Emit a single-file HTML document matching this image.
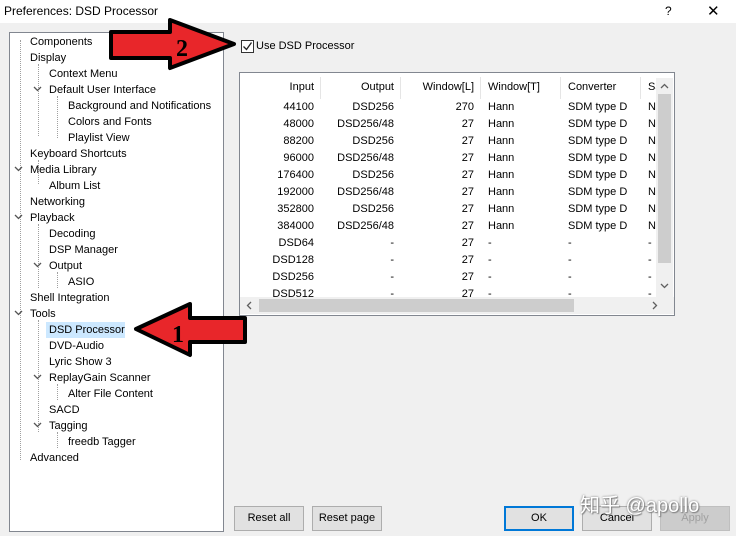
<!DOCTYPE html>
<html><head><meta charset="utf-8"><style>
*{margin:0;padding:0;box-sizing:border-box}
body{width:736px;height:536px;background:#f0f0f0;font-family:"Liberation Sans","Noto Sans CJK SC",sans-serif;font-size:11px;color:#000;position:relative;overflow:hidden}
.abs{position:absolute;white-space:nowrap}
#title{left:0;top:0;width:736px;height:23px;background:#fff}
#tree{left:9px;top:32px;width:215px;height:500px;background:#fff;border:1px solid #828790}
.t{position:absolute;line-height:14px;white-space:nowrap}
#lv{left:239px;top:72px;width:436px;height:244px;background:#fff;border:1px solid #828790;overflow:hidden}
.c{position:absolute;white-space:nowrap;line-height:14px}
.btn{position:absolute;top:506px;width:70px;height:25px;background:#e1e1e1;border:1px solid #adadad;text-align:center;line-height:23px;font-size:11px}
.dot{position:absolute;border-left:1px dotted #a0a0a0}
.ex{position:absolute;width:9px;height:6px}
</style></head><body>
<div id="title" class="abs"></div>
<div class="abs" style="left:4px;top:4px;font-size:12px">Preferences: DSD Processor</div>
<div class="abs" style="left:665px;top:4px;font-size:12px">?</div>
<div class="abs" style="left:707px;top:2px;font-size:15px">✕</div>

<div id="tree" class="abs">
<div class="dot" style="left:10px;top:7px;height:420px"></div>
<div class="dot" style="left:28px;top:31px;height:72px"></div>
<div class="dot" style="left:28px;top:127px;height:24px"></div>
<div class="dot" style="left:28px;top:191px;height:64px"></div>
<div class="dot" style="left:47px;top:63px;height:42px"></div>
<div class="dot" style="left:47px;top:239px;height:16px"></div>
<div class="dot" style="left:28px;top:287px;height:112px"></div>
<div class="dot" style="left:47px;top:351px;height:16px"></div>
<div class="dot" style="left:47px;top:399px;height:16px"></div>
</div>
<div class="abs" style="left:9px;top:33px;width:215px;height:500px">
<svg class="ex" style="left:24px;top:53px" viewBox="0 0 9 6"><polyline points="1,1 4.5,4.5 8,1" fill="none" stroke="#555" stroke-width="1.3"/></svg>
<svg class="ex" style="left:5px;top:133px" viewBox="0 0 9 6"><polyline points="1,1 4.5,4.5 8,1" fill="none" stroke="#555" stroke-width="1.3"/></svg>
<svg class="ex" style="left:5px;top:181px" viewBox="0 0 9 6"><polyline points="1,1 4.5,4.5 8,1" fill="none" stroke="#555" stroke-width="1.3"/></svg>
<svg class="ex" style="left:24px;top:229px" viewBox="0 0 9 6"><polyline points="1,1 4.5,4.5 8,1" fill="none" stroke="#555" stroke-width="1.3"/></svg>
<svg class="ex" style="left:5px;top:277px" viewBox="0 0 9 6"><polyline points="1,1 4.5,4.5 8,1" fill="none" stroke="#555" stroke-width="1.3"/></svg>
<svg class="ex" style="left:24px;top:341px" viewBox="0 0 9 6"><polyline points="1,1 4.5,4.5 8,1" fill="none" stroke="#555" stroke-width="1.3"/></svg>
<svg class="ex" style="left:24px;top:389px" viewBox="0 0 9 6"><polyline points="1,1 4.5,4.5 8,1" fill="none" stroke="#555" stroke-width="1.3"/></svg>
<div class="t" style="left:21px;top:2px">Components</div>
<div class="t" style="left:21px;top:18px">Display</div>
<div class="t" style="left:40px;top:34px">Context Menu</div>
<div class="t" style="left:40px;top:50px">Default User Interface</div>
<div class="t" style="left:59px;top:66px">Background and Notifications</div>
<div class="t" style="left:59px;top:82px">Colors and Fonts</div>
<div class="t" style="left:59px;top:98px">Playlist View</div>
<div class="t" style="left:21px;top:114px">Keyboard Shortcuts</div>
<div class="t" style="left:21px;top:130px">Media Library</div>
<div class="t" style="left:40px;top:146px">Album List</div>
<div class="t" style="left:21px;top:162px">Networking</div>
<div class="t" style="left:21px;top:178px">Playback</div>
<div class="t" style="left:40px;top:194px">Decoding</div>
<div class="t" style="left:40px;top:210px">DSP Manager</div>
<div class="t" style="left:40px;top:226px">Output</div>
<div class="t" style="left:59px;top:242px">ASIO</div>
<div class="t" style="left:21px;top:258px">Shell Integration</div>
<div class="t" style="left:21px;top:274px">Tools</div>
<div class="t" style="left:37px;top:289px;width:79px;height:16px;background:#cce8ff"></div>
<div class="t" style="left:40px;top:290px">DSD Processor</div>
<div class="t" style="left:40px;top:306px">DVD-Audio</div>
<div class="t" style="left:40px;top:322px">Lyric Show 3</div>
<div class="t" style="left:40px;top:338px">ReplayGain Scanner</div>
<div class="t" style="left:59px;top:354px">Alter File Content</div>
<div class="t" style="left:40px;top:370px">SACD</div>
<div class="t" style="left:40px;top:386px">Tagging</div>
<div class="t" style="left:59px;top:402px">freedb Tagger</div>
<div class="t" style="left:21px;top:418px">Advanced</div>
</div>

<div class="abs" style="left:241px;top:40px;width:13px;height:13px;border:1px solid #333;background:#fff"></div>
<svg class="abs" style="left:242px;top:41px" width="11" height="11"><polyline points="1.5,5.5 4.5,8.5 9.5,1.5" fill="none" stroke="#222" stroke-width="1.3"/></svg>
<div class="abs" style="left:256px;top:40px">Use DSD Processor</div>

<div id="lv" class="abs">
<div class="c" style="left:80px;top:4px;height:22px;border-left:1px solid #e5e5e5"></div>
<div class="c" style="left:160px;top:4px;height:22px;border-left:1px solid #e5e5e5"></div>
<div class="c" style="left:240px;top:4px;height:22px;border-left:1px solid #e5e5e5"></div>
<div class="c" style="left:320px;top:4px;height:22px;border-left:1px solid #e5e5e5"></div>
<div class="c" style="left:400px;top:4px;height:22px;border-left:1px solid #e5e5e5"></div>
<div id="rows"></div>
<div class="c" style="left:416px;top:5px;width:17px;height:219px;background:#f0f0f0"></div>
<div class="c" style="left:418px;top:21px;width:13px;height:169px;background:#cdcdcd"></div>
<svg class="c" style="left:420px;top:10px" width="9" height="6"><polyline points="1,5 4.5,1.5 8,5" fill="none" stroke="#606060" stroke-width="1.3"/></svg>
<svg class="c" style="left:420px;top:210px" width="9" height="6"><polyline points="1,1 4.5,4.5 8,1" fill="none" stroke="#606060" stroke-width="1.3"/></svg>
<div class="c" style="left:0;top:224px;width:434px;height:17px;background:#f0f0f0"></div>
<div class="c" style="left:19px;top:226px;width:315px;height:13px;background:#cdcdcd"></div>
<svg class="c" style="left:6px;top:228px" width="6" height="9"><polyline points="5,1 1.5,4.5 5,8" fill="none" stroke="#606060" stroke-width="1.3"/></svg>
<svg class="c" style="left:412px;top:228px" width="6" height="9"><polyline points="1,1 4.5,4.5 1,8" fill="none" stroke="#606060" stroke-width="1.3"/></svg>
</div>

<div class="btn" style="left:234px">Reset all</div>
<div class="btn" style="left:312px">Reset page</div>
<div class="btn" style="left:504px;border:2px solid #0078d7;line-height:21px">OK</div>
<div class="btn" style="left:582px">Cancel</div>
<div class="btn" style="left:660px;color:#a0a0a0;background:#cccccc;border-color:#bfbfbf">Apply</div>
<div class="abs" style="left:580px;top:489px;font-size:20px;color:#fff;text-shadow:0 0 2px #777,1px 1px 1px #888">知乎 @apollo</div>

<svg class="abs" style="left:0;top:0" width="736" height="536">
<polygon points="111,32 170,32 170,20 234,44 170,68 170,58 111,58" fill="#e8262a" stroke="#000" stroke-width="4" stroke-linejoin="round"/>
<text x="176" y="56" font-family="Liberation Serif,serif" font-size="24" font-weight="bold" fill="#000">2</text>
<polygon points="245,318 190,318 190,304 136,329 190,355 190,342 245,342" fill="#e8262a" stroke="#000" stroke-width="4" stroke-linejoin="round"/>
<text x="172" y="342" font-family="Liberation Serif,serif" font-size="24" font-weight="bold" fill="#000">1</text>
</svg>

<script>
var d=[["Input","Output","Window[L]","Window[T]","Converter","Sa"],
["44100","DSD256","270","Hann","SDM type D","No"],["48000","DSD256/48","27","Hann","SDM type D","No"],
["88200","DSD256","27","Hann","SDM type D","No"],["96000","DSD256/48","27","Hann","SDM type D","No"],
["176400","DSD256","27","Hann","SDM type D","No"],["192000","DSD256/48","27","Hann","SDM type D","No"],
["352800","DSD256","27","Hann","SDM type D","No"],["384000","DSD256/48","27","Hann","SDM type D","No"],
["DSD64","-","27","-","-","-"],["DSD128","-","27","-","-","-"],["DSD256","-","27","-","-","-"],["DSD512","-","27","-","-","-"]];
var h="";d.forEach(function(r,i){var y=i==0?7:27+(i-1)*17;
h+='<div class="c" style="right:'+(436-76)+'px;top:'+y+'px">'+r[0]+'</div>';
h+='<div class="c" style="right:'+(436-156)+'px;top:'+y+'px">'+r[1]+'</div>';
h+='<div class="c" style="right:'+(436-236)+'px;top:'+y+'px">'+r[2]+'</div>';
h+='<div class="c" style="left:248px;top:'+y+'px">'+r[3]+'</div>';
h+='<div class="c" style="left:328px;top:'+y+'px">'+r[4]+'</div>';
h+='<div class="c" style="left:408px;top:'+y+'px">'+r[5]+'</div>';});
document.getElementById("rows").innerHTML=h;
</script>
</body></html>
